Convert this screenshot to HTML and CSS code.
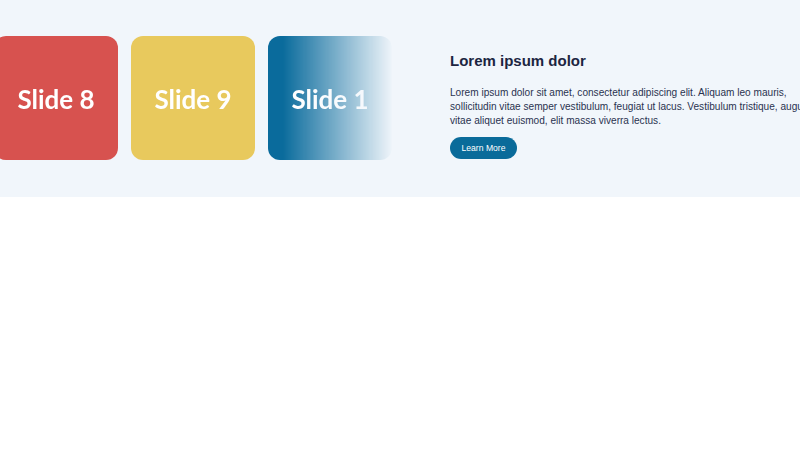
FILE: index.html
```html
<!DOCTYPE html>
<html>
<head>
<meta charset="utf-8">
<link rel="stylesheet" href="styles.css">
</head>
<body>
<section class="hero">
  <div class="carousel">
    <div class="track">
      <div class="slide red">Slide 8</div>
      <div class="slide yellow">Slide 9</div>
      <div class="slide blue">Slide 1</div>
    </div>
  </div>
  <div class="content">
    <h2 class="title">Lorem ipsum dolor</h2>
    <p class="text">Lorem ipsum dolor sit amet, consectetur adipiscing elit. Aliquam leo mauris, sollicitudin vitae semper vestibulum, feugiat ut lacus. Vestibulum tristique, augue vitae aliquet euismod, elit massa viverra lectus.</p>
    <button class="btn">Learn More</button>
  </div>
</section>
</body>
</html>
```
FILE: styles.css
```css
html, body {
  margin: 0;
  padding: 0;
  background: #ffffff;
  overflow: hidden;
}
.hero {
  background: #f1f6fb;
  height: 197px;
  display: flex;
  align-items: flex-start;
  padding-top: 36px;
  box-sizing: border-box;
  width: 800px;
}
.carousel {
  width: 395px;
  flex-shrink: 0;
  overflow: hidden;
  -webkit-mask-image: linear-gradient(to right, #000 0, #000 283px, rgba(0,0,0,0) 393px);
  mask-image: linear-gradient(to right, #000 0, #000 283px, rgba(0,0,0,0) 393px);
}
.track {
  display: flex;
  gap: 13px;
  margin-left: -6px;
}
.slide {
  width: 124px;
  height: 124px;
  flex-shrink: 0;
  border-radius: 12px;
  display: flex;
  align-items: center;
  justify-content: center;
  color: #ffffff;
  font-family: Lato, "Open Sans", sans-serif;
  font-weight: 700;
  font-size: 26px;
  padding-top: 1px;
  box-sizing: border-box;
}
.red { background: #d7524f; }
.yellow { background: #e8c95d; }
.blue { background: #0a6b9c; }
.content {
  margin-left: 55px;
  width: 380px;
  flex-shrink: 0;
  font-family: "Liberation Sans", Arial, sans-serif;
  color: #1c2541;
  padding-top: 15px;
}
.title {
  margin: 0 0 15px;
  font-size: 15px;
  font-weight: 700;
  line-height: 20px;
}
.text {
  margin: 0 0 9px;
  font-size: 10.1px;
  line-height: 14px;
  color: #2a3350;
}
.btn {
  display: block;
  background: #0a6b9a;
  color: #ffffff;
  border: none;
  border-radius: 11px;
  height: 22px;
  width: 67px;
  padding: 0;
  font-family: "Liberation Sans", Arial, sans-serif;
  font-size: 8.6px;
}
```
